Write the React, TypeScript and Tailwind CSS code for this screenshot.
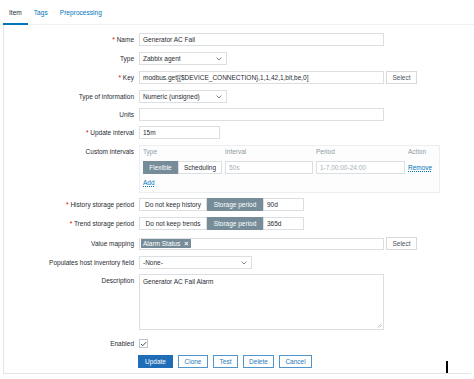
import React from "react";

const Label = ({ text, req, top }: { text: string; req?: boolean; top?: boolean }) => (
  <div className={`w-[130px] shrink-0 text-right text-[#1f2c33] leading-[8px] ${top ? "self-start" : ""}`}>
    {req && <span className="text-[#d40000]">* </span>}
    {text}
  </div>
);

const Input = ({ w, children, cls = "" }: { w: string; children?: React.ReactNode; cls?: string }) => (
  <div className={`${w} h-[13px] border border-[#dcdfe2] bg-white px-[3px] flex items-center text-[#1f2c33] whitespace-nowrap overflow-hidden ${cls}`}>
    {children}
  </div>
);

const Chevron = () => (
  <svg width="6" height="4" viewBox="0 0 6 4" className="ml-auto">
    <path d="M0.5 0.5 L3 3 L5.5 0.5" fill="none" stroke="#5b6770" strokeWidth="0.8" />
  </svg>
);

const Select = ({ w, text }: { w: string; text: string }) => (
  <div className={`${w} h-[13px] border border-[#dcdfe2] bg-white pl-[3px] pr-[4px] flex items-center text-[#1f2c33] whitespace-nowrap`}>
    {text}
    <Chevron />
  </div>
);

const GreyBtn = ({ children }: { children: React.ReactNode }) => (
  <div className="ml-[2px] w-[31px] h-[13px] border border-[#d5d9dc] bg-white flex items-center justify-center text-[#4b555c]">
    {children}
  </div>
);

const Row = ({ mt, children, top }: { mt: string; children: React.ReactNode; top?: boolean }) => (
  <div className={`flex ${top ? "items-start" : "items-center"} gap-[5px] ${mt}`}>{children}</div>
);

export default function App() {
  return (
    <div className="relative w-[474px] h-[379px] bg-white overflow-hidden font-['Liberation_Sans',Arial,sans-serif] text-[6.5px] text-[#1f2c33]">
      {/* tabs */}
      <div className="flex items-end h-[25px] pl-[3px] border-b border-[#eef0f1]">
        <div className="px-[6px] pb-[5px] border-b-2 border-[#0275b8] text-[#1f2c33] text-[6.6px] -mb-px">Item</div>
        <div className="px-[6px] pb-[6px] text-[#0275b8] text-[6.6px]">Tags</div>
        <div className="px-[6px] pb-[6px] text-[#0275b8] text-[6.6px]">Preprocessing</div>
      </div>

      {/* panel */}
      <div className="ml-[3px] w-[468px] border-l border-b border-[#e3e6e8] pb-[5px] flex flex-col">
        <Row mt="mt-[8px]">
          <Label text="Name" req />
          <Input w="w-[245px]">Generator AC Fail</Input>
        </Row>
        <Row mt="mt-[6px]">
          <Label text="Type" />
          <Select w="w-[88px]" text="Zabbix agent" />
        </Row>
        <Row mt="mt-[6px]">
          <Label text="Key" req />
          <div className="flex items-center">
            <Input w="w-[245px]">modbus.get[{"{$DEVICE_CONNECTION}"},1,1,42,1,bit,be,0]</Input>
            <GreyBtn>Select</GreyBtn>
          </div>
        </Row>
        <Row mt="mt-[6px]">
          <Label text="Type of information" />
          <Select w="w-[88px]" text="Numeric (unsigned)" />
        </Row>
        <Row mt="mt-[5px]">
          <Label text="Units" />
          <Input w="w-[245px]" />
        </Row>
        <Row mt="mt-[5px]">
          <Label text="Update interval" req />
          <Input w="w-[81px]">15m</Input>
        </Row>
        <Row mt="mt-[6px]" top>
          <div className="pt-[3px]">
            <Label text="Custom intervals" />
          </div>
          <div className="w-[301px] h-[48px] border border-[#eceef0] bg-[#fdfdfd] pl-[3px] pt-[1px] flex flex-col">
            <div className="grid grid-cols-[82px_91px_92px_auto] h-[10px] items-center text-[#8a99a2]">
              <div>Type</div>
              <div>Interval</div>
              <div>Period</div>
              <div>Action</div>
            </div>
            <div className="grid grid-cols-[82px_91px_92px_auto] mt-[4px] h-[13px] items-center">
              <div className="flex h-[13px]">
                <div className="w-[35px] h-[13px] bg-[#768d99] text-white flex items-center justify-center">Flexible</div>
                <div className="w-[44px] h-[13px] border border-[#dcdfe2] bg-white flex items-center justify-center text-[#1f2c33]">Scheduling</div>
              </div>
              <Input w="w-[88px]" cls="text-[#a4b0b7]">50s</Input>
              <Input w="w-[89px]" cls="text-[#a4b0b7]">1-7,00:00-24:00</Input>
              <div className="text-[#0275b8] underline decoration-dotted">Remove</div>
            </div>
            <div className="mt-[5px] text-[#0275b8] underline decoration-dotted leading-[8px]">Add</div>
          </div>
        </Row>
        <Row mt="mt-[5px]">
          <Label text="History storage period" req />
          <div className="flex h-[13px]">
            <div className="w-[68px] border border-[#dcdfe2] bg-white flex items-center justify-center">Do not keep history</div>
            <div className="w-[56px] bg-[#768d99] text-white flex items-center justify-center">Storage period</div>
            <Input w="w-[41px]">90d</Input>
          </div>
        </Row>
        <Row mt="mt-[6px]">
          <Label text="Trend storage period" req />
          <div className="flex h-[13px]">
            <div className="w-[68px] border border-[#dcdfe2] bg-white flex items-center justify-center">Do not keep trends</div>
            <div className="w-[56px] bg-[#768d99] text-white flex items-center justify-center">Storage period</div>
            <Input w="w-[41px]">365d</Input>
          </div>
        </Row>
        <Row mt="mt-[7px]">
          <Label text="Value mapping" />
          <div className="flex items-center">
            <div className="w-[245px] h-[12px] border border-[#dcdfe2] bg-white pl-[1px] flex items-center">
              <div className="h-[9px] w-[50px] bg-[#768d99] text-white flex items-center pl-[2px] gap-[4px]">
                <span>Alarm Status</span>
                <span className="font-bold text-[7px] leading-none">×</span>
              </div>
            </div>
            <GreyBtn>Select</GreyBtn>
          </div>
        </Row>
        <Row mt="mt-[6px]">
          <Label text="Populates host inventory field" />
          <Select w="w-[113px]" text="-None-" />
        </Row>
        <Row mt="mt-[5px]" top>
          <div className="pt-[3px]">
            <Label text="Description" />
          </div>
          <div className="relative w-[245px] h-[56px] border border-[#dcdfe2] bg-white px-[3px] pt-[2px]">
            Generator AC Fail Alarm
            <svg width="5" height="5" viewBox="0 0 5 5" className="absolute right-[1px] bottom-[1px]">
              <path d="M4.5 0.5 L0.5 4.5 M4.5 2.5 L2.5 4.5" stroke="#9aa3a8" strokeWidth="0.6" />
            </svg>
          </div>
        </Row>
        <Row mt="mt-[9px]">
          <Label text="Enabled" />
          <div className="w-[9px] h-[9px] border border-[#bfc7cc] bg-white flex items-center justify-center">
            <svg width="7" height="6" viewBox="0 0 7 6">
              <path d="M1 3 L2.8 4.7 L6 1.2" fill="none" stroke="#3b4c58" strokeWidth="1" />
            </svg>
          </div>
        </Row>
        <div className="flex mt-[7px] ml-[134px] h-[13px] gap-[5px]">
          <div className="w-[35px] bg-[#1e6db6] text-white flex items-center justify-center">Update</div>
          <div className="w-[30px] border border-[#4f95cc] text-[#2b78b8] flex items-center justify-center">Clone</div>
          <div className="w-[25px] border border-[#4f95cc] text-[#2b78b8] flex items-center justify-center">Test</div>
          <div className="w-[31px] border border-[#4f95cc] text-[#2b78b8] flex items-center justify-center">Delete</div>
          <div className="w-[33px] border border-[#4f95cc] text-[#2b78b8] flex items-center justify-center">Cancel</div>
        </div>
      </div>

      {/* text cursor */}
      <div className="absolute left-[446px] top-[361px] w-[2px] h-[12px] bg-black" />
    </div>
  );
}
